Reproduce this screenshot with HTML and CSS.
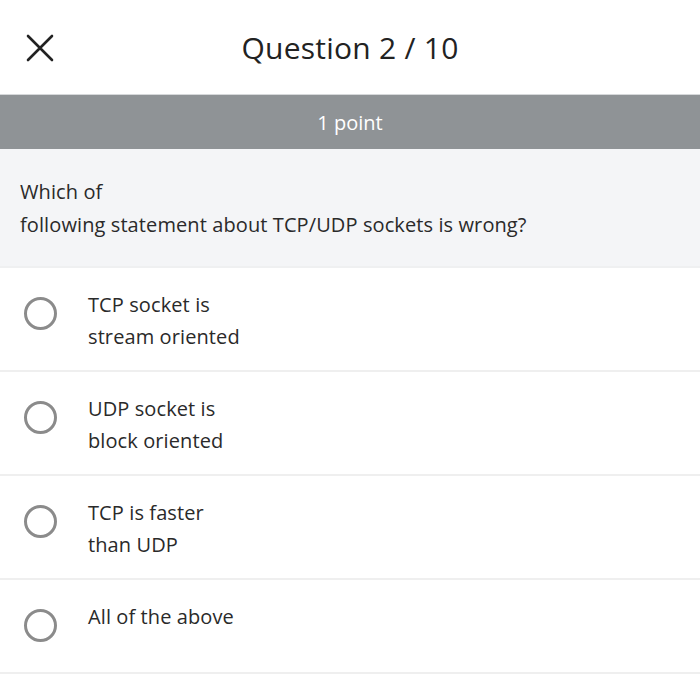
FILE: index.html
```html
<!DOCTYPE html>
<html>
<head>
<meta charset="utf-8">
<link rel="stylesheet" href="styles.css">
</head>
<body>
<div class="screen">
  <header class="topbar">
    <button class="close" aria-label="Close">
      <svg width="28" height="28" viewBox="0 0 28 28"><path d="M2 2 L26 26 M26 2 L2 26" stroke="#222" stroke-width="2.6" stroke-linecap="round" fill="none"/></svg>
    </button>
    <h1 class="title">Question 2 / 10</h1>
  </header>
  <div class="points">1 point</div>
  <div class="question">Which of<br>following statement about TCP/UDP sockets is wrong?</div>
  <ul class="options">
    <li class="option"><span class="radio"></span><span class="label">TCP socket is<br>stream oriented</span></li>
    <li class="option"><span class="radio"></span><span class="label">UDP socket is<br>block oriented</span></li>
    <li class="option"><span class="radio"></span><span class="label">TCP is faster<br>than UDP</span></li>
    <li class="option"><span class="radio"></span><span class="label">All of the above</span></li>
  </ul>
</div>
</body>
</html>
```

FILE: styles.css
```css
* { box-sizing: border-box; }
html, body { margin: 0; padding: 0; background: #fff; }
body { font-family: "Open Sans", "Noto Sans", sans-serif; color: #2a2a2a; }
.screen { width: 700px; }
.topbar {
  height: 95px;
  display: flex;
  align-items: center;
  justify-content: center;
  position: relative;
  border-bottom: 1px solid #d6d8da;
}
.close {
  position: absolute;
  left: 26px;
  top: 34px;
  border: 0;
  background: none;
  padding: 0;
  width: 28px;
  height: 28px;
}
.close svg { display: block; }
.title {
  margin: 0;
  font-size: 30px;
  font-weight: 400;
  color: #222;
  letter-spacing: 0.25px;
}
.points {
  height: 54px;
  background: #8f9396;
  color: #fff;
  font-size: 20px;
  display: flex;
  align-items: center;
  justify-content: center;
}
.question {
  background: #f4f5f7;
  font-size: 20px;
  line-height: 33px;
  padding: 26px 20px 25px;
  color: #2a2a2a;
  letter-spacing: 0.1px;
  border-bottom: 2px solid #eff0f1;
}
.options { list-style: none; margin: 0; padding: 0; }
.option {
  display: flex;
  align-items: flex-start;
  min-height: 94px;
  padding: 21px 0 17px 24px;
  border-bottom: 2px solid #efefef;
}
.radio {
  width: 33px;
  height: 33px;
  border: 3px solid #8b8b8b;
  border-radius: 50%;
  margin-top: 8px;
  flex: none;
}
.label {
  margin-left: 31px;
  font-size: 20px;
  line-height: 32px;
  color: #2a2a2a;
  letter-spacing: 0.1px;
}
```
